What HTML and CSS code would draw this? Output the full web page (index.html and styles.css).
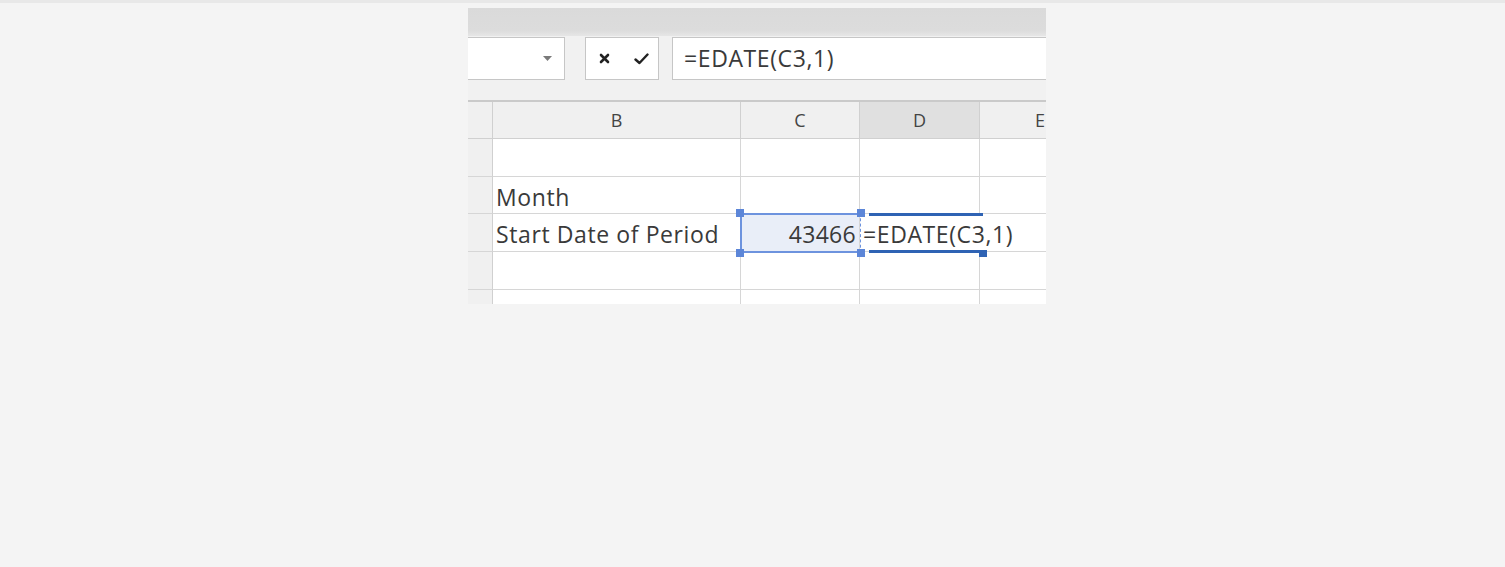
FILE: index.html
```html
<!DOCTYPE html>
<html lang="en">
<head>
  <meta charset="UTF-8">
  <title>EDATE</title>
  <link rel="stylesheet" href="styles.css">
</head>
<body>
  <div class="topline"></div>

  <div class="sheet">
    <div class="ribbon"></div>

    <div class="fbar">
      <div class="namebox">
        <svg class="arrow" width="9" height="5" viewBox="0 0 9 5"><path d="M0 0H9L4.5 5Z" fill="#7a7a7a"/></svg>
      </div>
      <div class="buttons">
        <svg width="11" height="11" viewBox="0 0 11 11"><path d="M2 2L9 9M9 2L2 9" stroke="#222" stroke-width="2.6" stroke-linecap="round"/></svg>
        <svg width="15" height="12" viewBox="0 0 15 12"><path d="M1.5 6.5L5.5 10L13.5 1.5" stroke="#222" stroke-width="2.4" fill="none" stroke-linecap="round" stroke-linejoin="round"/></svg>
      </div>
      <div class="formula">=EDATE(C3,1)</div>
    </div>

    <div class="grid">
      <div class="hd"></div><div class="hd">B</div><div class="hd">C</div><div class="hd active">D</div><div class="hd last">E</div>

      <div class="rh"></div><div class="c"></div><div class="c"></div><div class="c"></div><div class="c last"></div>
      <div class="rh"></div><div class="c">Month</div><div class="c"></div><div class="c"></div><div class="c last"></div>
      <div class="rh"></div><div class="c">Start Date of Period</div><div class="c num sel">43466</div><div class="c over">=EDATE(C3,1)</div><div class="c last"></div>
      <div class="rh"></div><div class="c"></div><div class="c"></div><div class="c"></div><div class="c last"></div>
      <div class="rh"></div><div class="c"></div><div class="c"></div><div class="c"></div><div class="c last"></div>

      <!-- selection marks drawn over the cells -->
      <div class="ref-box">
        <span class="h tl"></span><span class="h tr"></span><span class="h bl"></span><span class="h br"></span>
      </div>
      <div class="edit-box"><span class="fill"></span></div>
    </div>
  </div>
</body>
</html>
```

FILE: styles.css
```css
body {
  margin: 0;
  background: #f4f4f4;
  font-family: "Open Sans", "Noto Sans", sans-serif;
  color: #3a3a3a;
}
.topline {
  height: 3px;
  background: #e8e8e8;
}
.sheet {
  width: 578px;
  height: 296px;
  margin: 5px 0 0 468px;
  overflow: hidden;
  background: #f1f1f1;
}
.ribbon {
  height: 28px;
  background: linear-gradient(#dadada, #dcdcdc 80%, #e6e6e6);
}
.fbar {
  height: 64px;
  display: flex;
  align-items: flex-start;
  padding-top: 1px;
  box-sizing: border-box;
}
.namebox, .buttons, .formula {
  height: 43px;
  box-sizing: border-box;
  background: #fff;
  border: 1px solid #c6c6c6;
}
.namebox {
  width: 97px;
  border-left: none;
  display: flex;
  align-items: center;
  justify-content: flex-end;
  padding-right: 12px;
}
.buttons {
  width: 74px;
  margin-left: 20px;
  display: flex;
  align-items: center;
  gap: 24px;
  padding-left: 13px;
}
.formula {
  flex: 1;
  margin-left: 13px;
  border-right: none;
  font-size: 23px;
  letter-spacing: 0.6px;
  line-height: 40px;
  padding-left: 11px;
}
.grid {
  position: relative;
  display: grid;
  grid-template-columns: 25px 248px 119px 120px 66px;
  grid-template-rows: 37px 38px 37px 38px 38px 38px;
  border-top: 2px solid #cacaca;
  background: #fff;
}
.hd {
  background: #f0f0f0;
  border-right: 1px solid #d0d0d0;
  border-bottom: 1px solid #d0d0d0;
  font-size: 18px;
  line-height: 37px;
  text-align: center;
  color: #444;
}
.hd.active {
  background: #e0e0e0;
}
.hd.last {
  border-right: none;
  text-align: left;
  padding-left: 55px;
}
.rh {
  background: #f0f0f0;
  border-right: 1px solid #d0d0d0;
  border-bottom: 1px solid #d6d6d6;
}
.c {
  border-right: 1px solid #d6d6d6;
  border-bottom: 1px solid #d6d6d6;
  font-size: 23px;
  letter-spacing: 0.6px;
  line-height: 41px;
  padding-left: 3px;
  white-space: nowrap;
}
.c.last {
  border-right: none;
}
.c.num {
  text-align: right;
  padding-right: 3px;
  letter-spacing: 0.3px;
}
.c.sel {
  background: #e9eef8;
}
.c.over {
  overflow: visible;
  padding-left: 3px;
  position: relative;
  z-index: 1;
  border-right-color: transparent;
}
.ref-box {
  position: absolute;
  left: 272px;
  top: 111px;
  width: 121px;
  height: 40px;
  box-sizing: border-box;
  border: 2px solid #6d93de;
  border-right: 1px dashed #6d93de;
  z-index: 2;
}
.h {
  position: absolute;
  width: 8px;
  height: 8px;
  background: #5c86d8;
}
.h.tl { left: -6px; top: -6px; }
.h.tr { right: -5px; top: -6px; }
.h.bl { left: -6px; bottom: -6px; }
.h.br { right: -5px; bottom: -6px; }
.edit-box {
  position: absolute;
  left: 401px;
  top: 111px;
  width: 114px;
  height: 40px;
  box-sizing: border-box;
  border-top: 3px solid #2f63b4;
  border-bottom: 3px solid #2f63b4;
  z-index: 2;
}
.fill {
  position: absolute;
  right: -4px;
  bottom: -7px;
  width: 8px;
  height: 7px;
  background: #2f63b4;
}
```
